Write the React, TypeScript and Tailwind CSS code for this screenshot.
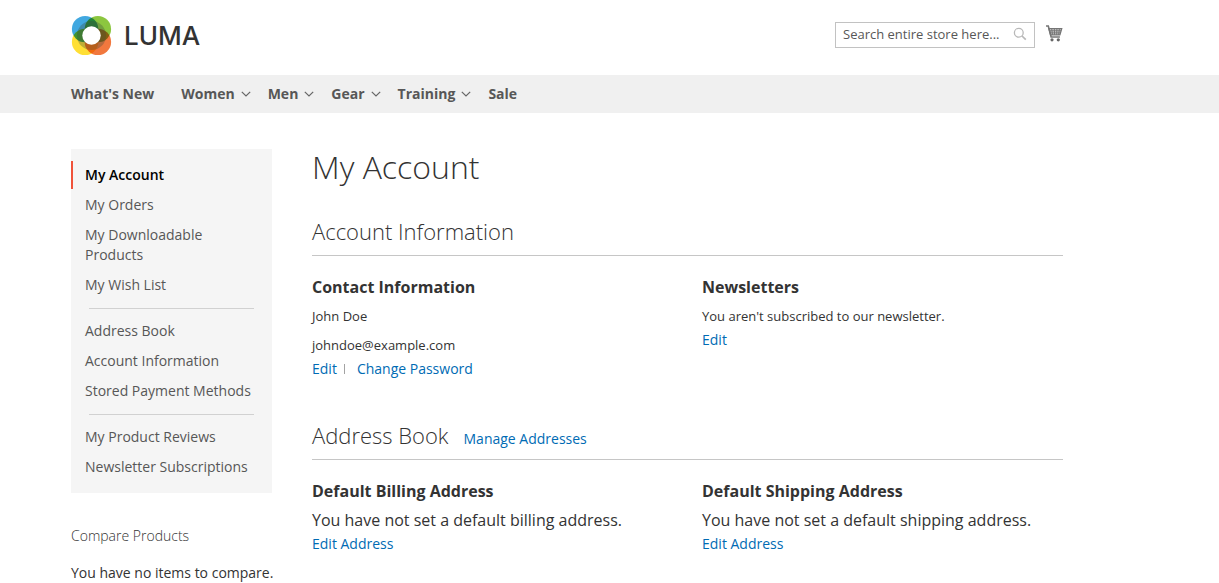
import type { ReactNode } from 'react';
import { Fragment } from 'react';

const NAV_ITEMS = [
  { label: "What's New", hasMenu: false },
  { label: 'Women', hasMenu: true },
  { label: 'Men', hasMenu: true },
  { label: 'Gear', hasMenu: true },
  { label: 'Training', hasMenu: true },
  { label: 'Sale', hasMenu: false },
];

// Each group is followed by a divider, except for the last one
const ACCOUNT_LINKS = [
  ['My Account', 'My Orders', 'My Downloadable Products', 'My Wish List'],
  ['Address Book', 'Account Information', 'Stored Payment Methods'],
  ['My Product Reviews', 'Newsletter Subscriptions'],
];

function Logo() {
  return (
    <a href="#" aria-label="LUMA" className="flex items-center gap-3">
      <svg viewBox="0 0 41 41" className="isolate h-[41px] w-[41px]" aria-hidden="true">
        <g className="[&>circle]:mix-blend-multiply">
          <circle cx="14.1" cy="14.1" r="13.2" fill="#41a8e0" />
          <circle cx="26.9" cy="14.1" r="13.2" fill="#8cc63f" />
          <circle cx="14.1" cy="26.9" r="13.2" fill="#ffdf35" />
          <circle cx="26.9" cy="26.9" r="13.2" fill="#f1783e" />
        </g>
        <circle cx="20.5" cy="20.5" r="14.6" fill="#3c4c3c" fillOpacity="0.33" />
        <circle cx="20.5" cy="20.5" r="9.2" fill="#fff" />
      </svg>
      <span className="font-[Inter,sans-serif] text-[26px] leading-8 font-medium text-[#333]">LUMA</span>
    </a>
  );
}

function SearchIcon() {
  return (
    <svg viewBox="0 0 14 14" className="h-3.5 w-3.5" fill="none" stroke="#b8b8b8" aria-hidden="true">
      <circle cx="5.8" cy="5.8" r="4.4" strokeWidth="1.3" />
      <path d="M9 9 12.8 12.6" strokeWidth="1.7" />
    </svg>
  );
}

function CartIcon() {
  return (
    <svg viewBox="0 0 17 17" className="h-[17px] w-[17px]" fill="none" stroke="#757575" aria-hidden="true">
      <path d="M0 1H2.3L5.1 12H13.9" strokeWidth="1.6" />
      <path d="M2.9 3.7H15.7L13.9 9.9H4.6Z" fill="#757575" fillOpacity="0.3" strokeWidth="1.3" />
      <path d="M3.5 5.8H15.1M4 7.9H14.5" strokeWidth="1" />
      <path d="M5.7 3.7 6.5 9.9M8.3 3.7 8.6 9.9M10.9 3.7 10.7 9.9M13.4 3.7 12.6 9.9" strokeWidth="1" />
      <circle cx="6" cy="14.8" r="1.6" fill="#666" stroke="none" />
      <circle cx="12.3" cy="14.8" r="1.6" fill="#666" stroke="none" />
    </svg>
  );
}

function ChevronIcon() {
  return (
    <svg viewBox="0 0 10 6" className="h-1.5 w-2.5" fill="none" stroke="#666" aria-hidden="true">
      <path d="M0.8 0.8 5 5 9.2 0.8" strokeWidth="1.2" />
    </svg>
  );
}

function TextLink({ children }: { children: ReactNode }) {
  return (
    <a href="#" className="text-sm leading-5 text-[#006bb4] hover:underline">
      {children}
    </a>
  );
}

function Section({ title, action, children }: { title: string; action?: ReactNode; children: ReactNode }) {
  return (
    <section>
      <div className="flex items-baseline gap-[15px] border-b border-[#c6c6c6] pb-2.5">
        <h2 className="text-[22px] leading-7 font-light">{title}</h2>
        {action}
      </div>
      <div className="mt-5 grid grid-cols-2 gap-[29px]">{children}</div>
    </section>
  );
}

function Block({ title, actions, children }: { title: string; actions: ReactNode; children: ReactNode }) {
  return (
    <div>
      <h3 className="mb-2 text-base leading-[22px] font-bold">{title}</h3>
      {children}
      <div className="mt-1 flex items-center">{actions}</div>
    </div>
  );
}

export default function App() {
  return (
    <div className="min-h-screen bg-white font-['Open_Sans',sans-serif] text-sm leading-5 text-[#333]">
      <header className="flex h-[75px] items-start justify-between pr-[156px] pl-[71px]">
        <div className="pt-[15px]">
          <Logo />
        </div>
        <div className="flex items-center gap-[11px] pt-[22px]">
          <form className="flex h-[26px] w-[200px] items-center border border-[#c2c2c2] pr-[7px] pb-0.5">
            <input
              type="text"
              aria-label="Search"
              placeholder="Search entire store here..."
              className="min-w-0 flex-1 bg-transparent pl-[7px] text-[13px] outline-none placeholder:text-[#575757]"
            />
            <button type="button" aria-label="Search">
              <SearchIcon />
            </button>
          </form>
          <a href="#" aria-label="My Cart" className="pb-[3px]">
            <CartIcon />
          </a>
        </div>
      </header>

      <nav className="bg-[#f0f0f0] pr-[156px] pl-[71px]">
        <ul className="flex h-[38px] items-center">
          {NAV_ITEMS.map((item) => (
            <li key={item.label} className={item.hasMenu ? 'mr-[17px]' : 'mr-[27px]'}>
              <a href="#" className="flex items-center gap-1.5 font-bold text-[#575757]">
                {item.label}
                {item.hasMenu && <ChevronIcon />}
              </a>
            </li>
          ))}
        </ul>
      </nav>

      <div className="flex gap-10 pt-9 pr-[156px] pl-[71px]">
        <aside className="w-[201px] shrink-0">
          <ul className="bg-[#f5f5f5] py-[11px]">
            {ACCOUNT_LINKS.map((group, i) => (
              <Fragment key={group[0]}>
                {i > 0 && <li className="mx-[18px] mt-2 mb-[7px] h-px bg-[#d1d1d1]" />}
                {group.map((label) => (
                  <li key={label}>
                    {label === 'My Account' ? (
                      <a
                        href="#"
                        aria-current="page"
                        className="my-px block border-l-2 border-[#f0533a] py-1 pl-3 font-semibold text-black"
                      >
                        {label}
                      </a>
                    ) : (
                      <a href="#" className="block py-[5px] pr-[18px] pl-3.5 text-[#575757]">
                        {label}
                      </a>
                    )}
                  </li>
                ))}
              </Fragment>
            ))}
          </ul>

          <h2 className="mt-[33px] font-light">Compare Products</h2>
          <p className="mt-[17px] whitespace-nowrap">You have no items to compare.</p>
        </aside>

        <main className="min-w-0 flex-1">
          <h1 className="mb-8 text-[32px] leading-9 font-light">My Account</h1>

          <div className="flex flex-col gap-[42px]">
            <Section title="Account Information">
              <Block
                title="Contact Information"
                actions={
                  <>
                    <TextLink>Edit</TextLink>
                    <span className="mr-3 ml-[7px] h-2.5 w-px bg-[#a3a3a3]" />
                    <TextLink>Change Password</TextLink>
                  </>
                }
              >
                <p className="mb-[9px] text-[13px]">John Doe</p>
                <p className="text-[13px]">johndoe@example.com</p>
              </Block>
              <Block title="Newsletters" actions={<TextLink>Edit</TextLink>}>
                <p className="text-[13px]">You aren't subscribed to our newsletter.</p>
              </Block>
            </Section>

            <Section title="Address Book" action={<TextLink>Manage Addresses</TextLink>}>
              <Block title="Default Billing Address" actions={<TextLink>Edit Address</TextLink>}>
                <p className="text-base leading-5">You have not set a default billing address.</p>
              </Block>
              <Block title="Default Shipping Address" actions={<TextLink>Edit Address</TextLink>}>
                <p className="text-base leading-5">You have not set a default shipping address.</p>
              </Block>
            </Section>
          </div>
        </main>
      </div>
    </div>
  );
}
